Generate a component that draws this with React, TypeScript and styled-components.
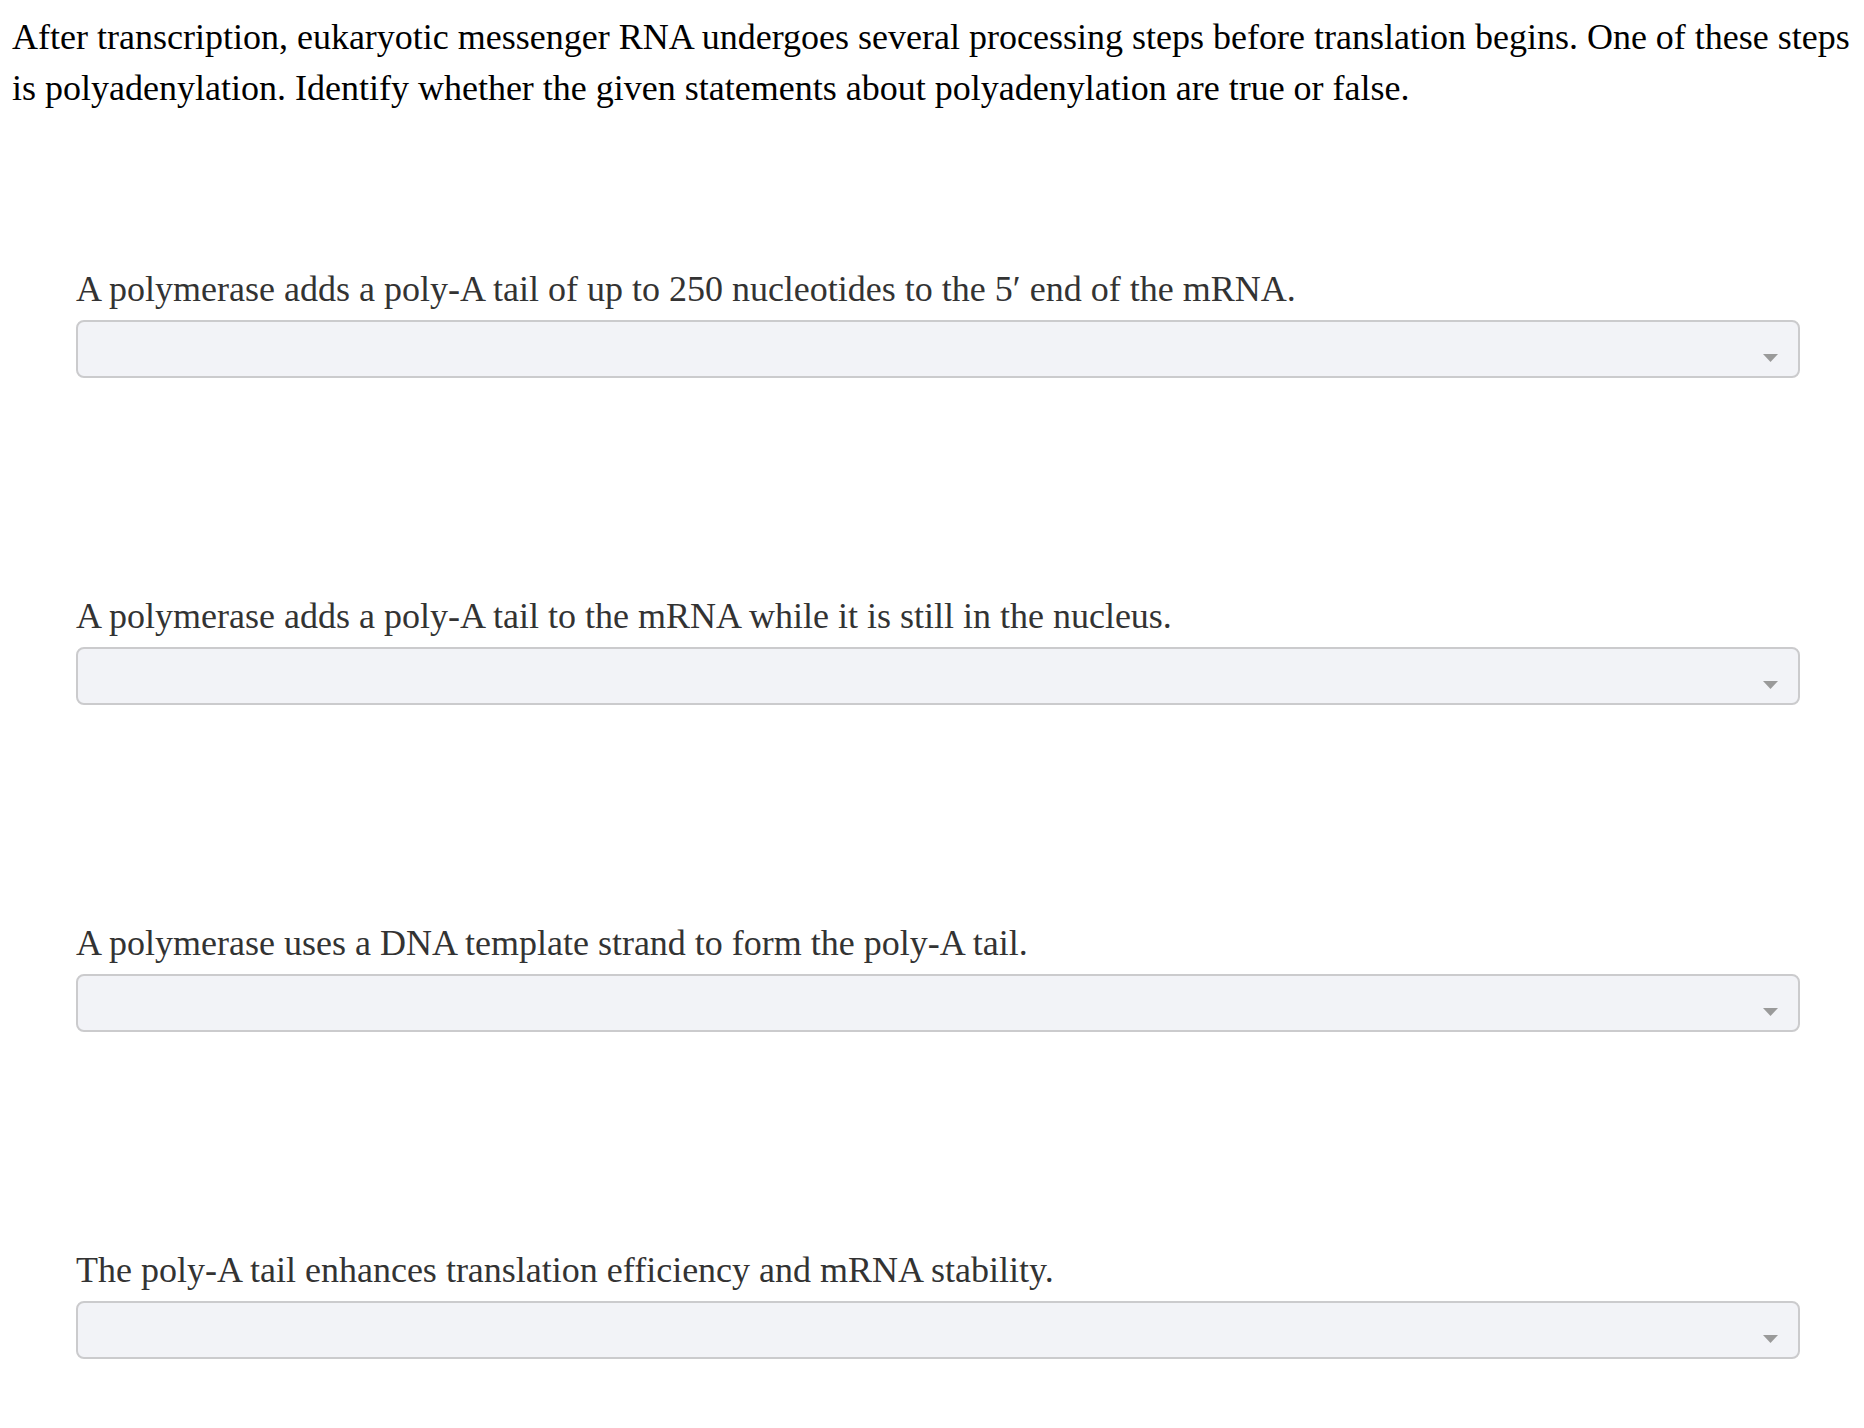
import React from "react";
import styled, { createGlobalStyle } from "styled-components";

const GlobalStyle = createGlobalStyle`
  html, body {
    margin: 0;
    padding: 0;
    background: #ffffff;
  }
  body {
    font-family: "Liberation Serif", "Times New Roman", serif;
  }
`;

const Page = styled.div`
  padding: 12px 12px 40px 12px;
  font-family: "Liberation Serif", "Times New Roman", serif;
`;

const Intro = styled.p`
  margin: 0;
  font-size: 36px;
  line-height: 51px;
  color: #000;
`;

const QuestionList = styled.div`
  display: flex;
  flex-direction: column;
  gap: 213px;
  margin: 150px 52px 0 64px;
`;

const Question = styled.div`
  display: flex;
  flex-direction: column;
  gap: 5px;
`;

const Statement = styled.div`
  font-size: 36px;
  line-height: 51px;
  color: #333;
`;

const Dropdown = styled.div`
  box-sizing: border-box;
  height: 58px;
  border: 2px solid #cbcbcd;
  border-radius: 8px;
  background: #f2f3f7;
  display: flex;
  justify-content: flex-end;
  align-items: flex-end;
  padding: 0 20px 14px 0;
  cursor: pointer;
`;

const Arrow = styled.svg`
  display: block;
  width: 15px;
  height: 8px;
`;

const statements = [
  "A polymerase adds a poly-A tail of up to 250 nucleotides to the 5\u2032 end of the mRNA.",
  "A polymerase adds a poly-A tail to the mRNA while it is still in the nucleus.",
  "A polymerase uses a DNA template strand to form the poly-A tail.",
  "The poly-A tail enhances translation efficiency and mRNA stability.",
];

export default function App() {
  return (
    <>
      <GlobalStyle />
      <Page>
        <Intro>
          After transcription, eukaryotic messenger RNA undergoes several processing steps before
          translation begins. One of these steps is polyadenylation. Identify whether the given
          statements about polyadenylation are true or false.
        </Intro>
        <QuestionList>
          {statements.map((s) => (
            <Question key={s}>
              <Statement>{s}</Statement>
              <Dropdown role="combobox" aria-label={s}>
                <Arrow viewBox="0 0 15 8">
                  <polygon points="0,0 15,0 7.5,8" fill="#9a9a9a" />
                </Arrow>
              </Dropdown>
            </Question>
          ))}
        </QuestionList>
      </Page>
    </>
  );
}
